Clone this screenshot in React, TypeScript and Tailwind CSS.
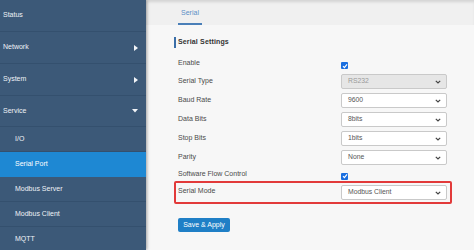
import React from "react";

const font = { fontFamily: '"Liberation Sans", Arial, sans-serif' };

function Chevron() {
  return (
    <svg width="6" height="4" viewBox="0 0 6 4" className="shrink-0">
      <polyline points="0.8,0.8 3,3 5.2,0.8" fill="none" stroke="#444" strokeWidth="1.2" />
    </svg>
  );
}

function Select({ value, disabled }: { value: string; disabled?: boolean }) {
  return (
    <div
      className={
        "w-[106px] h-[15px] border border-[#c9c9c9] rounded-[2px] flex items-center justify-between pl-[6px] pr-[5px] text-[6.8px] " +
        (disabled ? "bg-[#e6e6e6] text-[#9a9a9a]" : "bg-white text-[#555]")
      }
    >
      <span>{value}</span>
      <Chevron />
    </div>
  );
}

function Checkbox() {
  return (
    <div className="w-[7px] h-[7px] rounded-[1px] bg-[#1a6fe0] flex items-center justify-center">
      <svg width="6" height="6" viewBox="0 0 6 6">
        <polyline points="1,3.2 2.4,4.6 5,1.4" fill="none" stroke="white" strokeWidth="1.2" />
      </svg>
    </div>
  );
}

function Row({ label, children, h = "h-[19px]", shift = "" }: { label: string; children: React.ReactNode; h?: string; shift?: string }) {
  return (
    <div className={"flex items-center px-[4px] " + h}>
      <div className={"w-[163px] text-[7px] text-[#4a4a4a] " + shift}>{label}</div>
      {children}
    </div>
  );
}

function SideItem({ label, arrow, h }: { label: string; arrow?: "right" | "down"; h: string }) {
  return (
    <div className={"flex items-center justify-between pl-[3px] pr-[8px] border-b border-[#34506e] text-[7px] text-[#eef2f7] " + h}>
      <span>{label}</span>
      {arrow === "right" && (
        <svg width="4" height="6" viewBox="0 0 4 6">
          <polygon points="0,0 4,3 0,6" fill="#f2f5f8" />
        </svg>
      )}
      {arrow === "down" && (
        <svg width="6" height="4" viewBox="0 0 6 4">
          <polygon points="0,0 6,0 3,3.5" fill="#f2f5f8" />
        </svg>
      )}
    </div>
  );
}

function SubItem({ label, active }: { label: string; active?: boolean }) {
  return (
    <div
      className={
        "h-[25px] flex items-center pl-[15px] text-[7px] border-b " +
        (active ? "bg-[#1e88d3] text-white border-[#1e88d3]" : "text-[#eef2f7] border-[#34506e]")
      }
    >
      {label}
    </div>
  );
}

export default function App() {
  return (
    <div className="w-[474px] h-[250px] flex overflow-hidden bg-[#f7f7f7]" style={font}>
      <div className="w-[146px] h-full bg-[#3c5978] shrink-0 shadow-[1px_0_3px_rgba(0,0,0,0.35)] z-10">
        <SideItem label="Status" h="h-[32px]" />
        <SideItem label="Network" arrow="right" h="h-[32px]" />
        <SideItem label="System" arrow="right" h="h-[32px]" />
        <SideItem label="Service" arrow="down" h="h-[31px]" />
        <SubItem label="I/O" />
        <SubItem label="Serial Port" active />
        <SubItem label="Modbus Server" />
        <SubItem label="Modbus Client" />
        <SubItem label="MQTT" />
      </div>
      <div className="flex-1 flex flex-col">
        <div className="h-[25px] bg-[#f0f0f0] shadow-[inset_0_3px_3px_-1px_rgba(0,0,0,0.12)] flex items-end pl-[32px]">
          <div className="w-[24px] h-[25px] pt-[3px] flex items-center justify-center border-b-2 border-[#4a7fb8] text-[7px] text-[#5b8fc6]">
            Serial
          </div>
        </div>
        <div className="pl-[28px] pt-[12px]">
          <div className="flex items-center h-[11px] border-l-2 border-[#3a6ea8] pl-[2px] text-[7px] font-bold text-[#333] tracking-[0.15px]">
            Serial Settings
          </div>
          <div className="mt-[5px] w-[278px]">
            <Row label="Enable" shift="translate-y-[1px]">
              <div className="translate-y-[3px]">
                <Checkbox />
              </div>
            </Row>
            <Row label="Serial Type">
              <Select value="RS232" disabled />
            </Row>
            <Row label="Baud Rate">
              <Select value="9600" />
            </Row>
            <Row label="Data Bits">
              <Select value="8bits" />
            </Row>
            <Row label="Stop Bits">
              <Select value="1bits" />
            </Row>
            <Row label="Parity">
              <Select value="None" />
            </Row>
            <Row label="Software Flow Control" h="h-[14px]">
              <div className="translate-y-[2px]">
                <Checkbox />
              </div>
            </Row>
            <div className="h-[23px] border-2 border-[#e23a3a] rounded-[2px] flex items-center pl-[2px] pr-[3px]">
              <div className="w-[163px] text-[7px] text-[#4a4a4a] -translate-y-[1px]">Serial Mode</div>
              <Select value="Modbus Client" />
            </div>
            <div className="mt-[14px] px-[4px]">
              <div className="w-[52px] h-[14px] bg-[#1f7fc6] rounded-[2px] text-white text-[7px] flex items-center justify-center">
                Save &amp; Apply
              </div>
            </div>
          </div>
        </div>
      </div>
    </div>
  );
}
